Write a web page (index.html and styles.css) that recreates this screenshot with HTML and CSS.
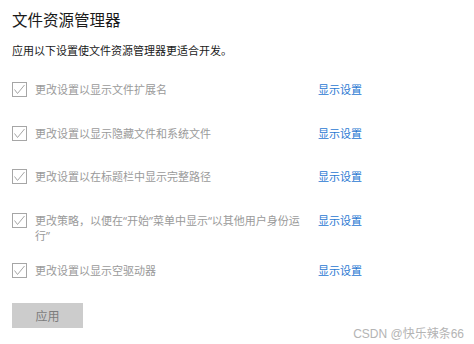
FILE: index.html
```html
<!DOCTYPE html>
<html lang="zh-CN">
<head>
<meta charset="utf-8">
<link rel="stylesheet" href="styles.css">
</head>
<body>
<div class="page">
  <h1 class="title">文件资源管理器</h1>
  <p class="subtitle">应用以下设置使文件资源管理器更适合开发。</p>
  <div class="list">
    <div class="row">
      <span class="check"><svg viewBox="0 0 15 15" width="15" height="15"><rect x="0.5" y="0.5" width="14" height="14" fill="none" stroke="#a6a6a6"/><polyline points="2.5,7.5 5.5,11.5 12.5,3" fill="none" stroke="#a6a6a6" stroke-width="1"/></svg></span>
      <span class="label">更改设置以显示文件扩展名</span>
      <a class="link">显示设置</a>
    </div>
    <div class="row">
      <span class="check"><svg viewBox="0 0 15 15" width="15" height="15"><rect x="0.5" y="0.5" width="14" height="14" fill="none" stroke="#a6a6a6"/><polyline points="2.5,7.5 5.5,11.5 12.5,3" fill="none" stroke="#a6a6a6" stroke-width="1"/></svg></span>
      <span class="label">更改设置以显示隐藏文件和系统文件</span>
      <a class="link">显示设置</a>
    </div>
    <div class="row">
      <span class="check"><svg viewBox="0 0 15 15" width="15" height="15"><rect x="0.5" y="0.5" width="14" height="14" fill="none" stroke="#a6a6a6"/><polyline points="2.5,7.5 5.5,11.5 12.5,3" fill="none" stroke="#a6a6a6" stroke-width="1"/></svg></span>
      <span class="label">更改设置以在标题栏中显示完整路径</span>
      <a class="link">显示设置</a>
    </div>
    <div class="row">
      <span class="check"><svg viewBox="0 0 15 15" width="15" height="15"><rect x="0.5" y="0.5" width="14" height="14" fill="none" stroke="#a6a6a6"/><polyline points="2.5,7.5 5.5,11.5 12.5,3" fill="none" stroke="#a6a6a6" stroke-width="1"/></svg></span>
      <span class="label">更改策略，以便在“开始”菜单中显示“以其他用户身份运行”</span>
      <a class="link">显示设置</a>
    </div>
    <div class="row">
      <span class="check"><svg viewBox="0 0 15 15" width="15" height="15"><rect x="0.5" y="0.5" width="14" height="14" fill="none" stroke="#a6a6a6"/><polyline points="2.5,7.5 5.5,11.5 12.5,3" fill="none" stroke="#a6a6a6" stroke-width="1"/></svg></span>
      <span class="label">更改设置以显示空驱动器</span>
      <a class="link">显示设置</a>
    </div>
  </div>
  <button class="apply">应用</button>
</div>
<div class="watermark">CSDN @快乐辣条66</div>
</body>
</html>
```

FILE: styles.css
```css
html, body {
  margin: 0;
  padding: 0;
  background: #ffffff;
}
body {
  font-family: "Noto Sans", "Noto Sans CJK SC", sans-serif;
  width: 474px;
  height: 344px;
  position: relative;
  overflow: hidden;
}
.page {
  padding: 10px 0 0 12px;
  display: flex;
  flex-direction: column;
  align-items: flex-start;
}
.title {
  margin: 0;
  font-size: 15.5px;
  font-weight: normal;
  line-height: 20px;
  color: #1a1a1a;
}
.subtitle {
  margin: 13px 0 0 0;
  font-size: 11px;
  line-height: 15px;
  color: #1a1a1a;
}
.list {
  margin-top: 24px;
  display: flex;
  flex-direction: column;
  gap: 20px;
}
.row {
  display: flex;
  align-items: flex-start;
  min-height: 23.5px;
}
.check {
  width: 15px;
  height: 15px;
  flex: none;
  display: block;
}
.check svg {
  display: block;
}
.label {
  margin-left: 8px;
  width: 268px;
  font-size: 11px;
  line-height: 15px;
  color: #9a9a9a;
}
.link {
  margin-left: 15px;
  font-size: 11px;
  line-height: 15px;
  color: #2a78d2;
  white-space: nowrap;
}
.apply {
  margin-top: 17px;
  width: 71px;
  height: 25px;
  border: none;
  background: #cccccc;
  color: #7c7c7c;
  font-family: "Noto Sans", "Noto Sans CJK SC", sans-serif;
  font-size: 12px;
  padding: 0;
}
.watermark {
  position: absolute;
  right: 10px;
  bottom: 3px;
  font-family: "Liberation Sans", "Noto Sans CJK SC", sans-serif;
  font-size: 12px;
  color: #b4b4b4;
}
```
